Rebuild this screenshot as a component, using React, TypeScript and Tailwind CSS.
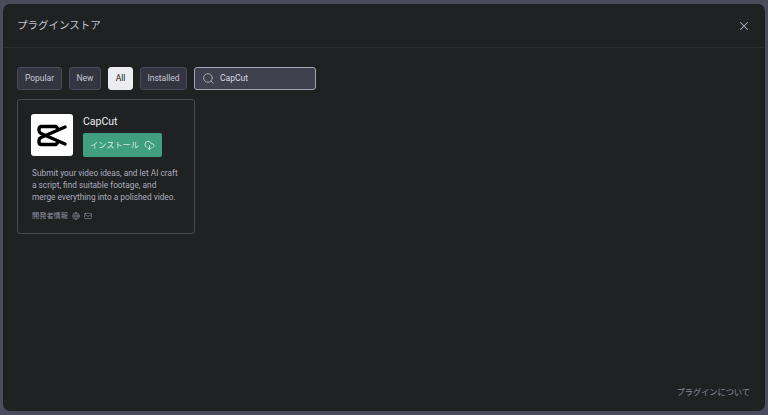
import { Search, X, CloudDownload, Globe, Mail } from 'lucide-react'

const font = { fontFamily: 'Roboto, "Noto Sans CJK JP", sans-serif' }

const tabs = [
  { label: 'Popular', width: 'w-[45px]' },
  { label: 'New', width: 'w-[32px]' },
  { label: 'All', width: 'w-[25px]', active: true },
  { label: 'Installed', width: 'w-[47px]' },
]

function CapCutLogo() {
  return (
    <svg width="30" height="23" viewBox="0 0 30 23" fill="none" stroke="#000" strokeWidth="3.4" strokeLinejoin="round" strokeLinecap="round">
      <path d="M28 3 L4 13.5 Q2 14.5 2 16.5 V18 Q2 20.5 4.5 20.5 H19 L21.5 17.5" />
      <path d="M28 20 L4 9.5 Q2 8.5 2 6.5 V5 Q2 2.5 4.5 2.5 H19 L21.5 5.5" />
    </svg>
  )
}

export default function App() {
  return (
    <div className="h-[415px] w-[768px] overflow-hidden bg-[#4b4b5c] pt-[4px] pb-[4px] px-[3px]" style={font}>
      <div className="flex h-[407px] flex-col rounded-[7px] bg-[#202123]">
        <div className="flex h-[44px] shrink-0 items-center justify-between border-b border-[#2c2d30] pl-[14px] pr-[14px]">
          <h1 className="text-[10.5px] text-[#c5c5d2]">プラグインストア</h1>
          <X size={14} strokeWidth={1.8} className="text-[#acacbe]" />
        </div>

        <div className="flex-1 pl-[14px] pt-[19px]">
          <div className="flex gap-[7px]">
            {tabs.map(tab => (
              <button
                key={tab.label}
                className={`flex h-[23px] items-center justify-center rounded-[3px] border text-[8.5px] ${tab.width} ${
                  tab.active
                    ? 'border-[#ececf1] bg-[#ececf1] text-[#202123]'
                    : 'border-[#4a4a58] bg-[#343541] text-[#c5c5d2]'
                }`}
              >
                {tab.label}
              </button>
            ))}
            <div className="flex h-[23px] w-[122px] items-center rounded-[3px] border border-[#a3a3b2] bg-[#40414f] pl-[7px]">
              <Search size={13} strokeWidth={1.3} className="text-[#c5c5d2]" />
              <span className="ml-[5px] text-[8.5px] text-[#d9d9e3]">CapCut</span>
            </div>
          </div>

          <div className="mt-[9px] h-[135px] w-[178px] rounded-[3px] border border-[#4a4a50] pl-[13px] pt-[14px]">
            <div className="flex">
              <div className="flex h-[42px] w-[42px] items-center justify-center rounded-[3px] bg-white">
                <CapCutLogo />
              </div>
              <div className="ml-[10px]">
                <p className="text-[10.5px] leading-[16px] text-[#ececf1]">CapCut</p>
                <button className="mt-[3px] flex h-[24px] w-[79px] items-center justify-center gap-[5px] rounded-[2px] bg-[#3f9f7f] text-[8.2px] text-[#d5e9e1]">
                  インストール
                  <CloudDownload size={11} strokeWidth={2} />
                </button>
              </div>
            </div>
            <p className="mt-[10px] w-[148px] pl-px text-[8.3px] leading-[12px] text-[#acacbe]">
              Submit your video ideas, and let AI craft a script, find suitable footage, and merge everything into a polished video.
            </p>
            <div className="mt-[7px] flex items-center gap-[4px] pl-px text-[7.2px] leading-[12px] text-[#8e8ea0]">
              <span>開発者情報</span>
              <Globe size={8} strokeWidth={1.8} />
              <Mail size={8} strokeWidth={1.8} />
            </div>
          </div>
        </div>

        <div className="flex justify-end pb-[13px] pr-[15px] text-[8.2px] leading-[12px] text-[#8e8ea0]">
          プラグインについて
        </div>
      </div>
    </div>
  )
}
